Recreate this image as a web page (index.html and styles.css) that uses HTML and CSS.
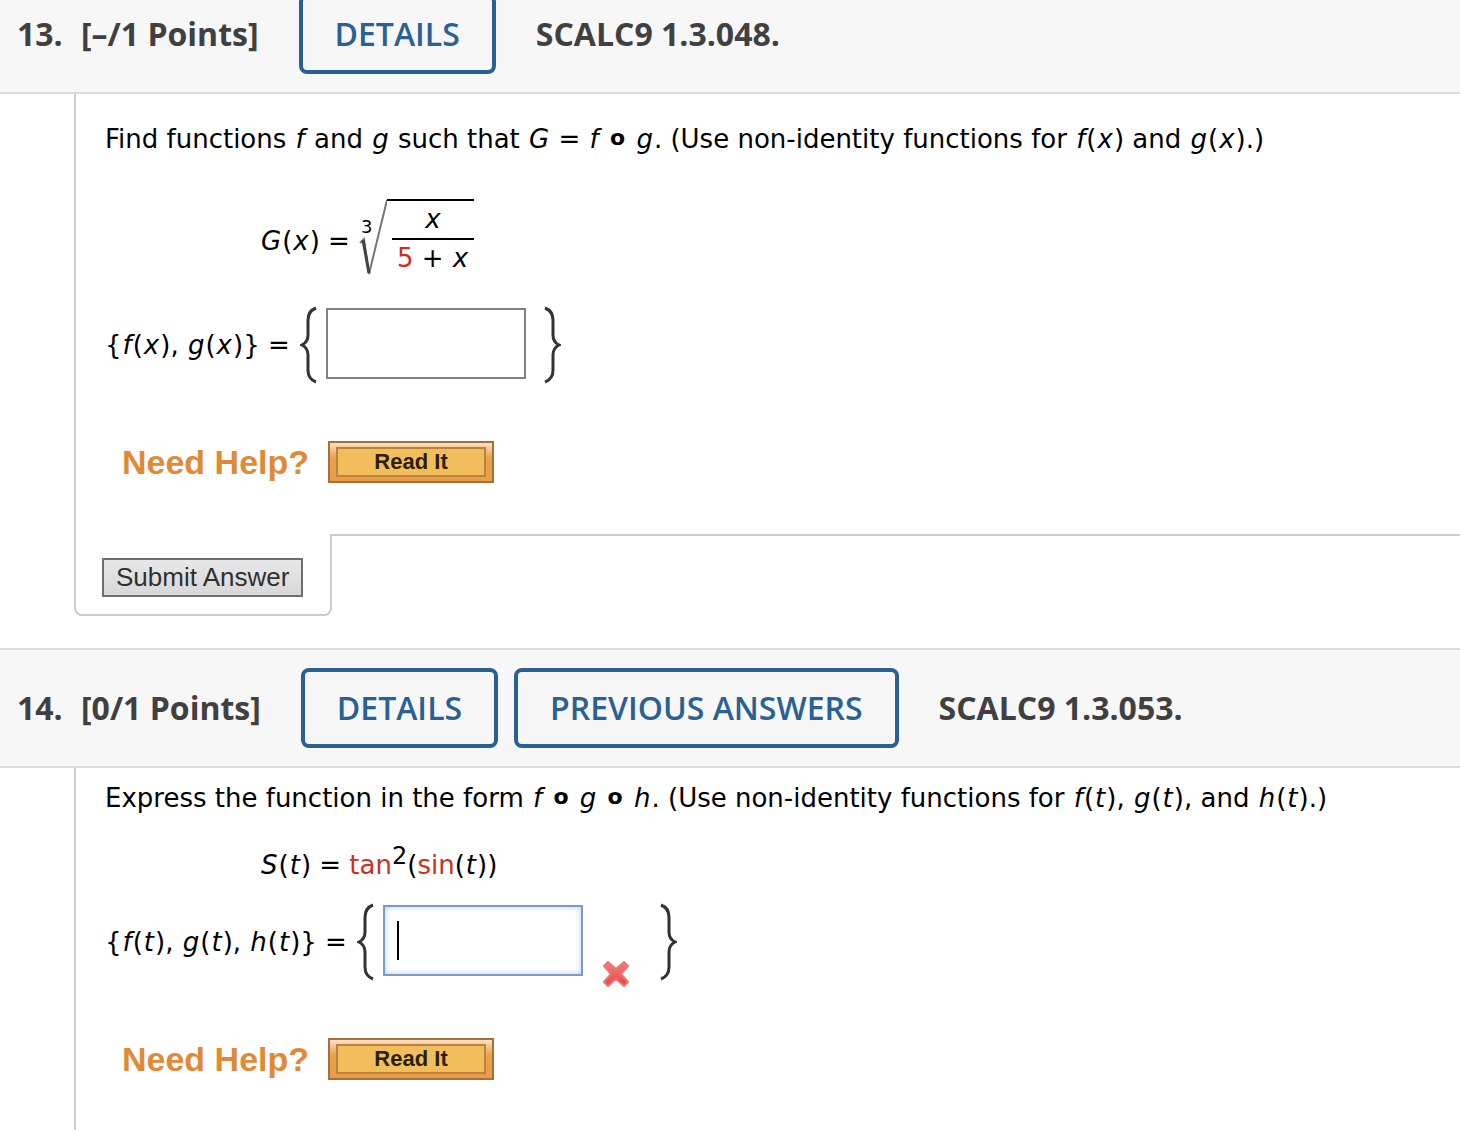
FILE: index.html
```html
<!DOCTYPE html>
<html lang="en">
<head>
  <meta charset="UTF-8">
  <meta name="viewport" content="width=device-width, initial-scale=1.0">
  <title>Assignment</title>
  <link rel="stylesheet" href="styles.css">
</head>
<body>
  <main class="assignment">

    <!-- Question 13 -->
    <section class="question">
      <header class="question-header">
        <span class="number">13.</span>
        <span class="points">[–/1 Points]</span>
        <div class="actions">
          <button type="button" class="header-btn">DETAILS</button>
        </div>
        <span class="source">SCALC9 1.3.048.</span>
      </header>
      <div class="question-body first">
        <p class="prompt">Find functions <i>f</i> and <i>g</i> such that <i>G</i> = <i>f</i> <span class="ring">o</span> <i>g</i>. (Use non-identity functions for <i>f</i>(<i>x</i>) and <i>g</i>(<i>x</i>).)</p>
        <div class="equation radical-row">
          <span><i>G</i>(<i>x</i>) =</span>
          <span class="root">
            <span class="root-index">3</span>
            <svg class="root-sign" width="28" height="80" viewBox="0 0 28 80">
              <path d="M1 45 L5 41 L10 76 L28 2" fill="none" stroke="#777" stroke-width="2"/>
              <path d="M4 42 L10 75" fill="none" stroke="#444" stroke-width="3"/>
            </svg>
            <span class="radicand">
              <span class="fraction">
                <span class="numerator"><i>x</i></span>
                <span class="denominator"><span class="red">5</span> + <i>x</i></span>
              </span>
            </span>
          </span>
        </div>
        <div class="answer-row">
          <label for="answer-13">{<i>f</i>(<i>x</i>), <i>g</i>(<i>x</i>)} =</label>
          <svg class="brace" width="18" height="78" viewBox="0 0 18 78">
            <path d="M16 2 Q8 5 8 14 V29 Q8 36 2 39 Q8 42 8 49 V64 Q8 73 16 76" fill="none" stroke="#333" stroke-width="3"/>
          </svg>
          <input type="text" id="answer-13" class="answer">
          <svg class="brace close" width="18" height="78" viewBox="0 0 18 78">
            <path d="M2 2 Q10 5 10 14 V29 Q10 36 16 39 Q10 42 10 49 V64 Q10 73 2 76" fill="none" stroke="#333" stroke-width="3"/>
          </svg>
        </div>
        <div class="help">
          <span class="help-title">Need Help?</span>
          <button type="button" class="help-btn"><span>Read It</span></button>
        </div>
      </div>
      <div class="question-footer">
        <div class="submit-tab">
          <button type="submit" class="submit-btn">Submit Answer</button>
        </div>
        <div class="footer-line"></div>
      </div>
    </section>

    <!-- Question 14 -->
    <section class="question">
      <header class="question-header">
        <span class="number">14.</span>
        <span class="points">[0/1 Points]</span>
        <div class="actions">
          <button type="button" class="header-btn">DETAILS</button>
          <button type="button" class="header-btn">PREVIOUS ANSWERS</button>
        </div>
        <span class="source">SCALC9 1.3.053.</span>
      </header>
      <div class="question-body second">
        <p class="prompt">Express the function in the form <i>f</i> <span class="ring">o</span> <i>g</i> <span class="ring">o</span> <i>h</i>. (Use non-identity functions for <i>f</i>(<i>t</i>), <i>g</i>(<i>t</i>), and <i>h</i>(<i>t</i>).)</p>
        <div class="equation"><i>S</i>(<i>t</i>) = <span class="red">tan</span><sup>2</sup>(<span class="red">sin</span>(<i>t</i>))</div>
        <div class="answer-row">
          <label for="answer-14">{<i>f</i>(<i>t</i>), <i>g</i>(<i>t</i>), <i>h</i>(<i>t</i>)} =</label>
          <svg class="brace" width="18" height="78" viewBox="0 0 18 78">
            <path d="M16 2 Q8 5 8 14 V29 Q8 36 2 39 Q8 42 8 49 V64 Q8 73 16 76" fill="none" stroke="#333" stroke-width="3"/>
          </svg>
          <span class="answer-wrap">
            <input type="text" id="answer-14" class="answer active">
            <span class="caret"></span>
          </span>
          <svg class="wrong" width="28" height="28" viewBox="0 0 28 28" role="img" aria-label="Incorrect">
            <defs>
              <linearGradient id="wrong-fill" x1="0" y1="0" x2="0" y2="28" gradientUnits="userSpaceOnUse">
                <stop offset="0%" stop-color="#f08482"/>
                <stop offset="100%" stop-color="#df4340"/>
              </linearGradient>
            </defs>
            <path d="M6 2 L14 9 L22 2 L26 6 L19 14 L26 22 L22 26 L14 19 L6 26 L2 22 L9 14 L2 6 Z" fill="url(#wrong-fill)" stroke="#ec7573" stroke-width="2" stroke-linejoin="round"/>
          </svg>
          <svg class="brace close" width="18" height="78" viewBox="0 0 18 78">
            <path d="M2 2 Q10 5 10 14 V29 Q10 36 16 39 Q10 42 10 49 V64 Q10 73 2 76" fill="none" stroke="#333" stroke-width="3"/>
          </svg>
        </div>
        <div class="help">
          <span class="help-title">Need Help?</span>
          <button type="button" class="help-btn"><span>Read It</span></button>
        </div>
      </div>
    </section>

  </main>
</body>
</html>
```

FILE: styles.css
```css
html, body {
  margin: 0;
  padding: 0;
  background: #fff;
}
body {
  font-family: Verdana, "DejaVu Sans", sans-serif;
  font-size: 26px;
  line-height: 32px;
  color: #000;
  overflow: hidden;
}
/* The list is scrolled a little past the first header */
.assignment {
  margin-top: -26px;
}

/* Question header */
.question-header {
  display: flex;
  align-items: center;
  height: 116px;
  padding-left: 17px;
  border-top: 2px solid #ddd;
  border-bottom: 2px solid #ddd;
  background: #f7f7f7;
  color: #404040;
  font-family: "Open Sans", sans-serif;
  font-size: 32px;
  font-weight: 700;
  line-height: 44px;
  white-space: nowrap;
}
.number {
  width: 64px;
}
.actions {
  display: flex;
  gap: 16px;
  margin: 0 40px;
}
.header-btn {
  height: 80px;
  padding: 0 32px;
  border: 4px solid #2a6193;
  border-radius: 8px;
  background: transparent;
  color: #2a6193;
  font-family: inherit;
  font-size: 32px;
  font-weight: 600;
  line-height: 44px;
  cursor: pointer;
}

/* Question body */
.question-body {
  margin-left: 74px;
  padding-left: 29px;
  border-left: 2px solid #ccc;
}
.question-body.first {
  padding-top: 29px;
  padding-bottom: 51px;
}
.question-body.second {
  padding-top: 14px;
  padding-bottom: 64px;
}
.question-body i {
  margin: 0 1px;
}
.prompt {
  margin: 0;
}
.ring {
  margin: 0 2px;
  font-size: 22px;
  font-weight: 700;
  line-height: 20px;
  vertical-align: 3px;
}
.red {
  color: #c8321f;
}
.equation {
  margin-top: 35px;
  padding-left: 155px;
}
.equation sup {
  font-size: 24px;
  line-height: 0;
}

/* Cube root with a fraction under it */
.equation.radical-row {
  display: flex;
  align-items: center;
  gap: 9px;
  margin-top: 43px;
}
.root {
  display: flex;
  position: relative;
  padding-bottom: 6px;
}
.root-index {
  position: absolute;
  left: 2px;
  top: 19px;
  font-size: 18px;
  line-height: 20px;
}
.root-sign {
  display: block;
}
.radicand {
  border-top: 2px solid #000;
  padding-left: 5px;
  margin-top: 1px;
}
.fraction {
  display: flex;
  flex-direction: column;
  text-align: center;
}
.numerator {
  height: 37px;
  line-height: 37px;
  border-bottom: 2px solid #000;
}
.denominator {
  padding: 0 5px;
  line-height: 36px;
}

/* Answer line */
.answer-row {
  display: flex;
  align-items: center;
  margin-top: 22px;
}
.brace {
  margin: 0 8px 0 10px;
}
.brace.close {
  margin: 0 0 0 17px;
}
.answer-wrap {
  display: flex;
  position: relative;
}
.answer {
  box-sizing: border-box;
  width: 200px;
  height: 71px;
  margin: 0 0 4px;
  padding: 0 12px;
  border: 2px solid #808080;
  background: #fff;
  font: inherit;
}
.answer.active {
  border-color: #7a9bc4;
  box-shadow: inset 0 0 6px #b5d0f5;
}
.caret {
  position: absolute;
  left: 14px;
  top: 16px;
  width: 2px;
  height: 39px;
  background: #000;
}
.wrong {
  align-self: flex-end;
  margin: 0 12px -7px 19px;
}

/* Help bar */
.help {
  display: flex;
  align-items: center;
  gap: 19px;
  margin-top: 57px;
  padding-left: 17px;
  font-family: "Liberation Sans", Arial, sans-serif;
  font-weight: 700;
}
.help-title {
  color: #e08a36;
  font-size: 34px;
  line-height: 42px;
}
.help-btn {
  width: 166px;
  height: 42px;
  padding: 4px 6px;
  border: 2px solid #a5713a;
  background: linear-gradient(#fbe0c4, #eba04c 40%, #eb9c48);
  font: inherit;
  cursor: pointer;
}
.help-btn span {
  display: block;
  border: 2px solid #b98440;
  background: #f2be5c;
  color: #2c2008;
  font-size: 22px;
  line-height: 26px;
}

/* Submit tab hanging below the question */
.question-footer {
  display: flex;
  align-items: flex-start;
  margin-left: 74px;
  margin-bottom: 32px;
}
.submit-tab {
  padding: 24px 27px 17px 26px;
  border: 2px solid #ccc;
  border-top: 0;
  border-radius: 0 0 8px 8px;
}
.submit-btn {
  display: block;
  height: 39px;
  padding: 0 12px;
  border: 2px solid #6e6e6e;
  background: linear-gradient(#e8e8e8, #d8d8d8);
  color: #303030;
  font-family: "Liberation Sans", Arial, sans-serif;
  font-size: 26px;
  cursor: pointer;
}
.footer-line {
  flex: 1;
  border-top: 2px solid #ccc;
}
```
